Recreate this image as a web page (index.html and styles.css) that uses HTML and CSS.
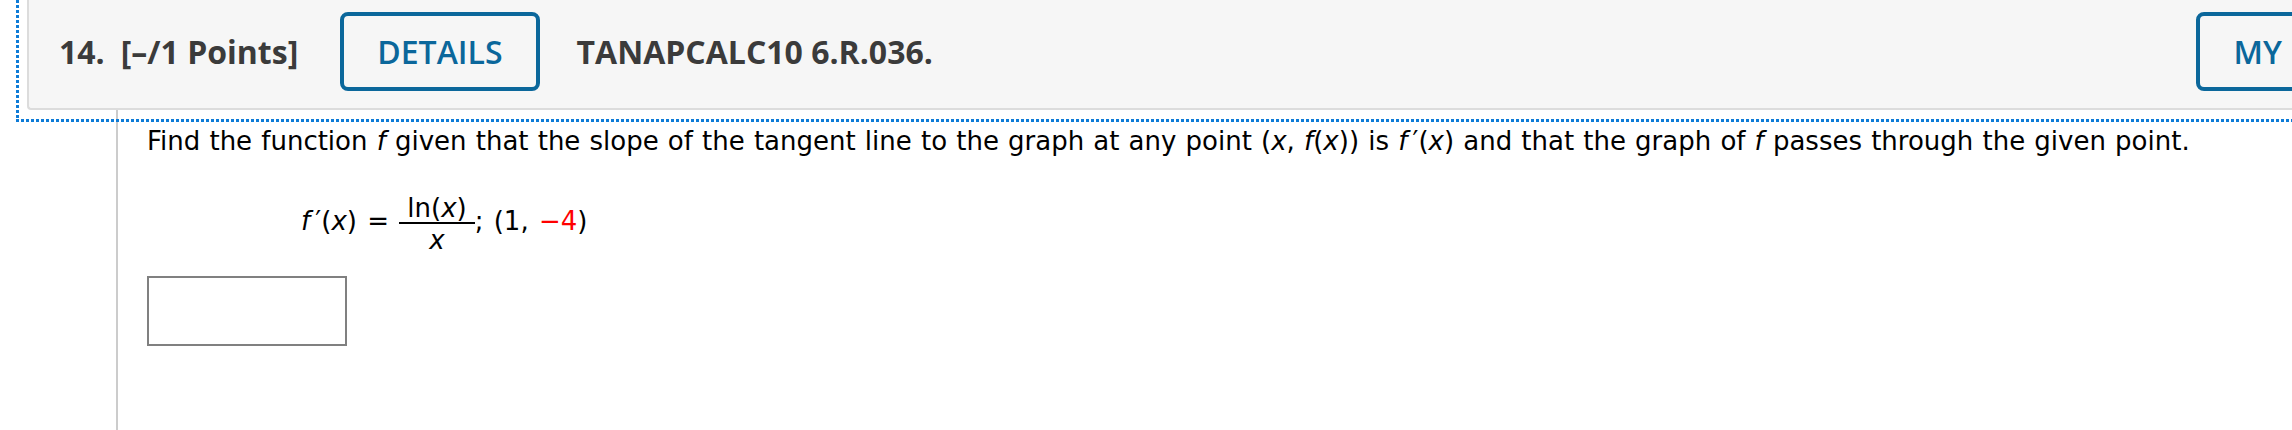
FILE: index.html
```html
<!DOCTYPE html>
<html lang="en">
<head>
<meta charset="utf-8">
<title>Question 14</title>
<link rel="stylesheet" href="styles.css">
</head>
<body>
<div class="question">
  <div class="qhead">
    <span class="qnum">14.</span>
    <span class="qpts">[–/1 Points]</span>
    <button class="btn btn-details" type="button">DETAILS</button>
    <span class="qref">TANAPCALC10 6.R.036.</span>
    <div class="qtools">
      <button class="btn" type="button">MY NOTES</button>
    </div>
  </div>
  <div class="qbody">
    <p class="prompt">Find the function <i>f</i> given that the slope of the tangent line to the graph at any point (<i>x</i>, <i>f</i>(<i>x</i>)) is <i>f</i>&thinsp;′(<i>x</i>) and that the graph of <i>f</i> passes through the given point.</p>
    <div class="eq"><i>f</i>&thinsp;′(<i>x</i>) = <span class="frac"><span class="num">ln(<i>x</i>)</span><span class="den"><i>x</i></span></span>; (1, <span class="neg">−4</span>)</div>
    <div class="answer"></div>
  </div>
</div>
</body>
</html>
```
FILE: styles.css
```css
html, body {
  margin: 0;
  padding: 0;
  background: #ffffff;
  overflow: hidden;
}

body {
  width: 2292px;
  height: 430px;
}

.question {
  padding-left: 27px;
}

.qhead {
  position: relative;
  display: flex;
  align-items: center;
  width: 2436px;
  box-sizing: border-box;
  height: 110px;
  padding: 12px 32px 17px 30px;
  background: #f6f6f6;
  border-left: 2px solid #dcdcdc;
  border-bottom: 2px solid #dcdcdc;
  border-bottom-left-radius: 4px;
  font-family: "Open Sans", "Liberation Sans", sans-serif;
  color: #3b3b3b;
}

.qhead::after {
  content: "";
  position: absolute;
  left: -13px;
  top: -20px;
  right: -13px;
  bottom: -14px;
  pointer-events: none;
  background:
    repeating-linear-gradient(to bottom, #0d7bd7 0 3px, transparent 3px 5px) left top / 3px 100% no-repeat,
    repeating-linear-gradient(to right, #0d7bd7 0 3px, transparent 3px 5px) left bottom / 100% 3px no-repeat;
}

.qnum,
.qpts,
.qref {
  font-size: 32px;
  font-weight: 700;
  white-space: nowrap;
}

.qpts {
  margin-left: 16px;
}

.btn {
  box-sizing: border-box;
  height: 79px;
  padding: 0 33px;
  border: 4px solid #0b679b;
  border-radius: 8px;
  background: transparent;
  color: #0b679b;
  font-family: "Open Sans", "Liberation Sans", sans-serif;
  font-size: 32px;
  font-weight: 600;
  white-space: nowrap;
}

.btn-details {
  margin-left: 42px;
}

.qref {
  margin-left: 37px;
}

.qtools {
  margin-left: auto;
  display: flex;
}

.qbody {
  margin-left: 89px;
  border-left: 2px solid #cccccc;
  padding: 16px 0 90px 29px;
  font-family: "DejaVu Sans", Verdana, sans-serif;
  font-size: 26px;
  color: #000000;
}

.prompt {
  margin: 0;
  line-height: 30px;
  white-space: nowrap;
  word-spacing: 0.9px;
}

.eq {
  margin: 38px 0 0 154px;
  line-height: 30px;
  word-spacing: 2px;
}

.frac {
  display: inline-flex;
  flex-direction: column;
  align-items: center;
  vertical-align: 13px;
}

.num {
  line-height: 28px;
  padding: 0 8px;
  border-bottom: 2px solid #000000;
}

.den {
  line-height: 33px;
}

.neg {
  color: #ff0000;
}

.answer {
  margin-top: 19px;
  box-sizing: border-box;
  width: 200px;
  height: 70px;
  border: 2px solid #808080;
  background: #ffffff;
}
```
